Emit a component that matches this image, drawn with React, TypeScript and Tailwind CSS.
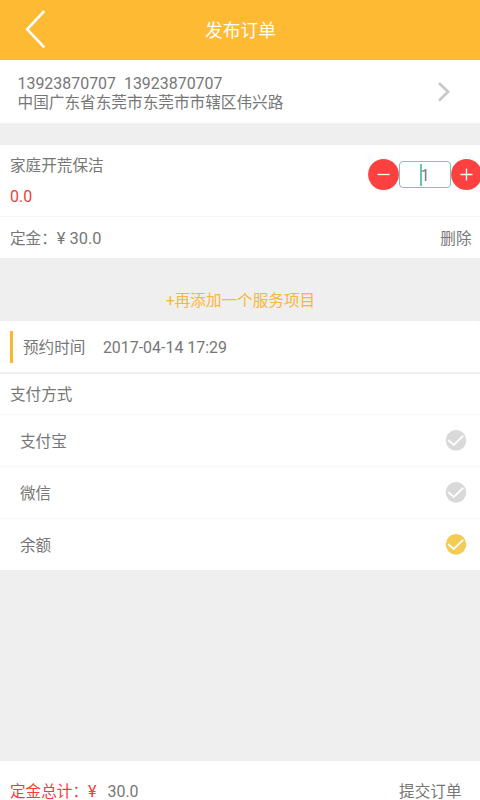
import { useState } from 'react'

const payMethods = [
  { id: 'alipay', label: '支付宝' },
  { id: 'wechat', label: '微信' },
  { id: 'balance', label: '余额' }
]

function CheckMark({ active }: { active: boolean }) {
  return (
    <svg width="22" height="22" viewBox="0 0 22 22" fill="none">
      <circle cx="11" cy="10.4" r="10.3" className={active ? 'fill-[#f3cb55]' : 'fill-[#d9d9d9]'} />
      <path d="M3.2 10.1L8.7 15L18.2 5.9" stroke="#fff" strokeWidth="1.9" />
    </svg>
  )
}

interface RoundButtonProps {
  plus?: boolean
  onClick: () => void
}

function RoundButton({ plus, onClick }: RoundButtonProps) {
  return (
    <button onClick={onClick} className="size-[31px] shrink-0">
      <svg width="31" height="31" viewBox="0 0 31 31" fill="none">
        <circle cx="15.5" cy="15.5" r="15.4" fill="#fd4040" />
        <path d={plus ? 'M9.5 15.5H21.5M15.5 9.5V21.5' : 'M9.5 15.5H21.5'} stroke="#fff" strokeWidth="1.3" />
      </svg>
    </button>
  )
}

export default function App() {
  const [count, setCount] = useState(1)
  const [method, setMethod] = useState('balance')

  return (
    <div className="flex h-[800px] w-[480px] flex-col overflow-hidden bg-[#efefef] font-[Roboto,'Noto_Sans_CJK_SC',sans-serif] text-[15.6px] leading-[18px] text-[#777]">
      {/* Header */}
      <header className="grid h-[60px] shrink-0 grid-cols-[1fr_auto_1fr] items-center bg-[#ffba33] text-white">
        <svg className="ml-6" width="24" height="40" viewBox="0 0 24 40" fill="none">
          <path d="M20.2 1.2L3.2 19.3L20.2 37.4" stroke="#fff" strokeWidth="2.6" />
        </svg>
        <h1 className="pt-0.5 pl-px text-[17.7px]">发布订单</h1>
      </header>

      {/* Address */}
      <section className="flex h-[63px] shrink-0 items-center justify-between bg-white pr-[30px] pl-[17.5px]">
        <div className="pt-[3px]">
          <p className="text-[15.95px] whitespace-pre">13923870707  13923870707</p>
          <p className="text-[15.65px] leading-[19px]">中国广东省东莞市东莞市市辖区伟兴路</p>
        </div>
        <svg width="13" height="22" viewBox="0 0 13 22" fill="none">
          <path d="M2 2L11 10.8L2 19.6" stroke="#c8c8c8" strokeWidth="2.7" />
        </svg>
      </section>

      {/* Service item */}
      <section className="mt-[22px] h-[113px] shrink-0 bg-white">
        <div className="flex h-[72px] justify-between border-b border-[#f5f5f5] pl-2.5">
          <div className="pt-3">
            <p>家庭开荒保洁</p>
            <p className="mt-[13px] text-[15.95px] text-[#f43c3c]">0.0</p>
          </div>
          <div className="mt-3.5 -mr-[2px] flex h-[31px] items-center">
            <RoundButton onClick={() => setCount(Math.max(1, count - 1))} />
            <div className="flex h-[27px] w-[52px] items-center justify-center rounded border border-[#7cc5bb]">
              <span className="h-[22px] w-[1.5px] bg-[#64c4b5]" />
              <span className="-ml-px pt-0.5">{count}</span>
            </div>
            <RoundButton plus onClick={() => setCount(count + 1)} />
          </div>
        </div>
        <div className="flex h-[41px] items-center justify-between pt-0.5 pr-[8.5px] pl-2.5">
          <span>
            定金：<span className="text-[16.4px]">¥ 30.0</span>
          </span>
          <span>删除</span>
        </div>
      </section>

      <button className="h-[63px] shrink-0 pt-[22px] pl-px text-[#fab637]">+再添加一个服务项目</button>

      {/* Appointment time */}
      <section className="flex h-[53px] shrink-0 items-center rounded-t-xs border-b-2 border-[#eee] bg-white pl-2.5">
        <span className="h-8 w-[3px] bg-[#ffb62e]" />
        <span className="ml-2.5 pt-0.5">预约时间</span>
        <span className="ml-[17.5px] pt-0.5 text-[15.95px]">2017-04-14 17:29</span>
      </section>

      {/* Payment */}
      <section className="shrink-0 bg-white">
        <h2 className="flex h-10 items-center pt-0.5 pl-2.5">支付方式</h2>
        {payMethods.map(item => (
          <div
            key={item.id}
            onClick={() => setMethod(item.id)}
            className="flex h-[52px] items-center justify-between border-t border-[#f7f7f7] pr-[13px] pl-5"
          >
            <span className="pt-0.5">{item.label}</span>
            <CheckMark active={method === item.id} />
          </div>
        ))}
      </section>

      {/* Footer */}
      <footer className="mt-auto flex h-[39px] shrink-0 items-end justify-between bg-white pr-[18.5px] pl-2.5 leading-[15px]">
        <p>
          <span className="text-[#f43c3c]">
            定金总计：<span className="text-[16.2px]">¥</span>
          </span>
          <span className="ml-[11px] text-[15.95px]">30.0</span>
        </p>
        <span>提交订单</span>
      </footer>
    </div>
  )
}
